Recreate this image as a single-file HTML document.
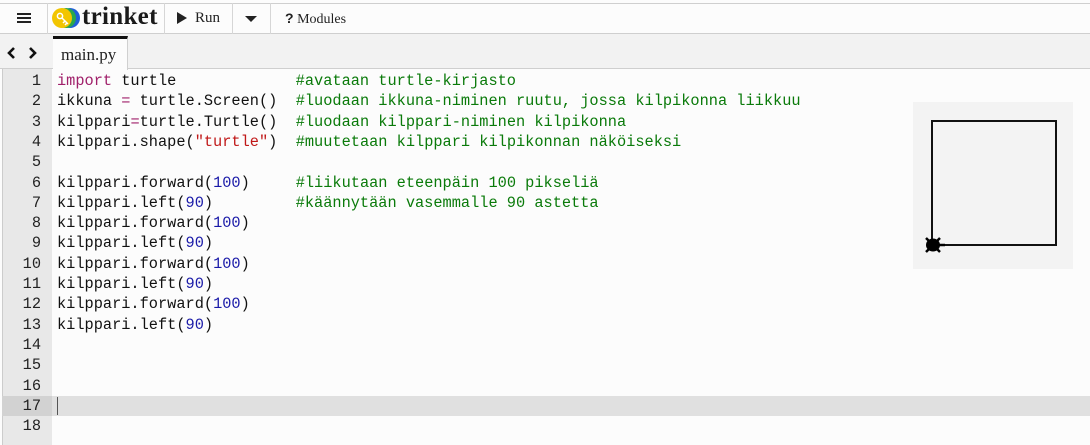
<!DOCTYPE html>
<html><head><meta charset="utf-8"><style>
*{margin:0;padding:0;box-sizing:border-box}
body{width:1090px;height:445px;background:#fcfcfc;font-family:"Liberation Sans",sans-serif;position:relative;overflow:hidden}
.tb{position:absolute;left:0;top:3px;width:1090px;height:31px;background:#fcfcfc;border-top:1px solid #cfcfcf;border-bottom:1px solid #cfcfcf}
.sep{position:absolute;top:3px;width:1px;height:31px;background:#d6d6d6}
.tabrow{position:absolute;left:0;top:34px;width:1090px;height:35px;background:#f2f2f2;border-bottom:1px solid #cfcfcf}
.tab{position:absolute;left:53px;top:36px;width:75px;height:34px;background:#fcfcfc;border-top:3px solid #111;border-right:1px solid #d0d0d0;font-family:"Liberation Serif",serif;font-size:17px;padding:6px 0 0 8px;color:#222}
.gut{position:absolute;left:2px;top:69px;width:50px;height:376px;background:#e8e8e8;border-left:1px solid #ccc}
.code{position:absolute;left:0;top:71px;font-family:"Liberation Mono",monospace;font-size:15.3px;line-height:20.3px;white-space:pre;color:#111}
.ln{position:absolute;left:0;width:41px;text-align:right;color:#222}
.cl{position:absolute;left:57px}
.k{color:#a0206a}.c{color:#0a7a0a}.s{color:#c01818}.n{color:#1a1aa8}.o{color:#a0206a}
.hl{position:absolute;left:2px;top:396px;width:1088px;height:20px;background:#e0e0e0}
.hlg{position:absolute;left:2px;top:396px;width:50px;height:20px;background:#d2d2d2}
</style></head><body>
<div class="tb"></div>
<div class="sep" style="left:47px"></div><div class="sep" style="left:164px"></div><div class="sep" style="left:232px"></div><div class="sep" style="left:270px"></div>
<div style="position:absolute;left:17px;top:13px;width:14px;height:2px;background:#222;box-shadow:0 4px 0 #222,0 8px 0 #222"></div>
<svg style="position:absolute;left:50px;top:7px" width="32" height="22"><circle cx="20" cy="11" r="10" fill="#1f5fd6"/><circle cx="16" cy="11" r="10" fill="#2aa84a"/><circle cx="12" cy="11" r="10" fill="#f2c500"/><circle cx="10" cy="9" r="2.6" fill="none" stroke="#fff" stroke-width="1.5"/><path d="M12 11 L18 17 M15 14 L13 16 M17 16 L15 18" stroke="#fff" stroke-width="1.5"/></svg>
<div style="position:absolute;left:82px;top:3px;font-family:'Liberation Serif',serif;font-size:25px;font-weight:bold;color:#1a1a1a;letter-spacing:0.3px">trinket</div>
<svg style="position:absolute;left:177px;top:12px" width="10" height="12"><path d="M0 0 L10 6 L0 12Z" fill="#222"/></svg>
<div style="position:absolute;left:195px;top:10px;font-family:'Liberation Serif',serif;font-size:15px;color:#222">Run</div>
<svg style="position:absolute;left:245px;top:16px" width="12" height="7"><path d="M0 0 L12 0 L6 6Z" fill="#222"/></svg>
<div style="position:absolute;left:285px;top:10px;font-family:'Liberation Serif',serif;font-size:14px;color:#222"><b style="font-family:'Liberation Sans'">?</b> Modules</div>
<div class="tabrow"></div>
<svg style="position:absolute;left:7px;top:46px" width="30" height="14"><path d="M7 2 L2 7 L7 12 M23 2 L28 7 L23 12" fill="none" stroke="#111" stroke-width="2.6"/></svg>
<div class="tab">main.py</div>
<div class="gut"></div>
<div class="hl"></div><div class="hlg"></div>
<div style="position:absolute;left:57px;top:397px;width:1px;height:18px;background:#555"></div>
<div style="position:absolute;left:913px;top:102px;width:160px;height:167px;background:#f3f3f3"></div>
<div style="position:absolute;left:931px;top:120px;width:126px;height:126px;border:2px solid #111"></div>
<svg style="position:absolute;left:922px;top:234px" width="26" height="22"><ellipse cx="11" cy="11" rx="7" ry="6.5" fill="#000"/><path d="M4 4 L18 18 M4 18 L18 4 M11 11 L23 11" stroke="#000" stroke-width="2.5"/></svg>
<div class="code">
<div class="ln" style="top:0">1</div><div class="ln" style="top:20.3px">2</div><div class="ln" style="top:40.6px">3</div><div class="ln" style="top:60.9px">4</div><div class="ln" style="top:81.2px">5</div><div class="ln" style="top:101.5px">6</div><div class="ln" style="top:121.8px">7</div><div class="ln" style="top:142.1px">8</div><div class="ln" style="top:162.4px">9</div><div class="ln" style="top:182.7px">10</div><div class="ln" style="top:203px">11</div><div class="ln" style="top:223.3px">12</div><div class="ln" style="top:243.6px">13</div><div class="ln" style="top:263.9px">14</div><div class="ln" style="top:284.2px">15</div><div class="ln" style="top:304.5px">16</div><div class="ln" style="top:324.8px">17</div><div class="ln" style="top:345.1px">18</div>
<div class="cl" style="top:0"><span class="k">import</span> turtle             <span class="c">#avataan turtle-kirjasto</span></div>
<div class="cl" style="top:20.3px">ikkuna <span class="o">=</span> turtle.Screen()  <span class="c">#luodaan ikkuna-niminen ruutu, jossa kilpikonna liikkuu</span></div>
<div class="cl" style="top:40.6px">kilppari<span class="o">=</span>turtle.Turtle()  <span class="c">#luodaan kilppari-niminen kilpikonna</span></div>
<div class="cl" style="top:60.9px">kilppari.shape(<span class="s">"turtle"</span>)  <span class="c">#muutetaan kilppari kilpikonnan näköiseksi</span></div>
<div class="cl" style="top:101.5px">kilppari.forward(<span class="n">100</span>)     <span class="c">#liikutaan eteenpäin 100 pikseliä</span></div>
<div class="cl" style="top:121.8px">kilppari.left(<span class="n">90</span>)         <span class="c">#käännytään vasemmalle 90 astetta</span></div>
<div class="cl" style="top:142.1px">kilppari.forward(<span class="n">100</span>)</div>
<div class="cl" style="top:162.4px">kilppari.left(<span class="n">90</span>)</div>
<div class="cl" style="top:182.7px">kilppari.forward(<span class="n">100</span>)</div>
<div class="cl" style="top:203px">kilppari.left(<span class="n">90</span>)</div>
<div class="cl" style="top:223.3px">kilppari.forward(<span class="n">100</span>)</div>
<div class="cl" style="top:243.6px">kilppari.left(<span class="n">90</span>)</div>
</div>
</body></html>
